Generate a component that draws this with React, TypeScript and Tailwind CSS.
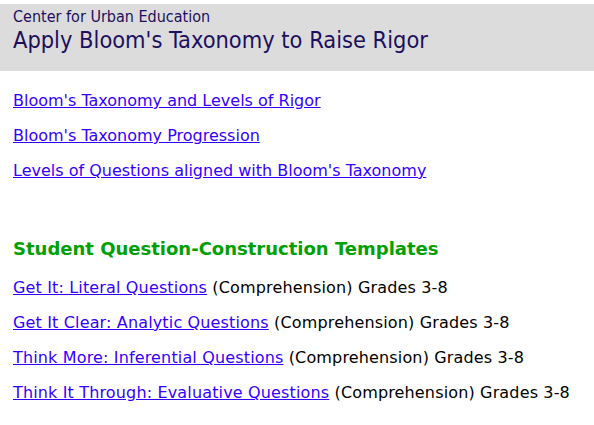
export default function App() {
  const templates = [
    { title: "Get It: Literal Questions", note: "(Comprehension) Grades 3-8" },
    { title: "Get It Clear: Analytic Questions", note: "(Comprehension) Grades 3-8" },
    { title: "Think More: Inferential Questions", note: "(Comprehension) Grades 3-8" },
    { title: "Think It Through: Evaluative Questions", note: "(Comprehension) Grades 3-8" },
  ];
  const links = [
    "Bloom's Taxonomy and Levels of Rigor",
    "Bloom's Taxonomy Progression",
    "Levels of Questions aligned with Bloom's Taxonomy",
  ];

  return (
    <div className="min-h-[425px] bg-white font-['DejaVu_Sans',Verdana,sans-serif] text-[16px]">
      {/* header band */}
      <div className="mt-[4px] h-[67px] bg-[#dcdcdc] px-[13px] pt-[3px] font-['DejaVu_Sans_Condensed',Tahoma,sans-serif] text-[#1c0f5e]">
        <div className="text-[16px] leading-[20px]">Center for Urban Education</div>
        <div className="text-[23.4px] leading-[26px]">Apply Bloom's Taxonomy to Raise Rigor</div>
      </div>

      <div className="px-[13px] pt-[20px]">
        <div className="flex flex-col gap-[15px]">
          {links.map((l) => (
            <a key={l} href="#" className="block w-fit leading-[20px] text-[#3300ff] underline">
              {l}
            </a>
          ))}
        </div>

        <h2 className="mt-[57px] text-[18px] font-bold leading-[22px] text-[#00a000]">
          Student Question-Construction Templates
        </h2>

        <div className="mt-[18px] flex flex-col gap-[15px] tracking-[0.15px]">
          {templates.map((t) => (
            <div key={t.title} className="leading-[20px] text-black">
              <a href="#" className="text-[#3300ff] underline">{t.title}</a> {t.note}
            </div>
          ))}
        </div>
      </div>
    </div>
  );
}
